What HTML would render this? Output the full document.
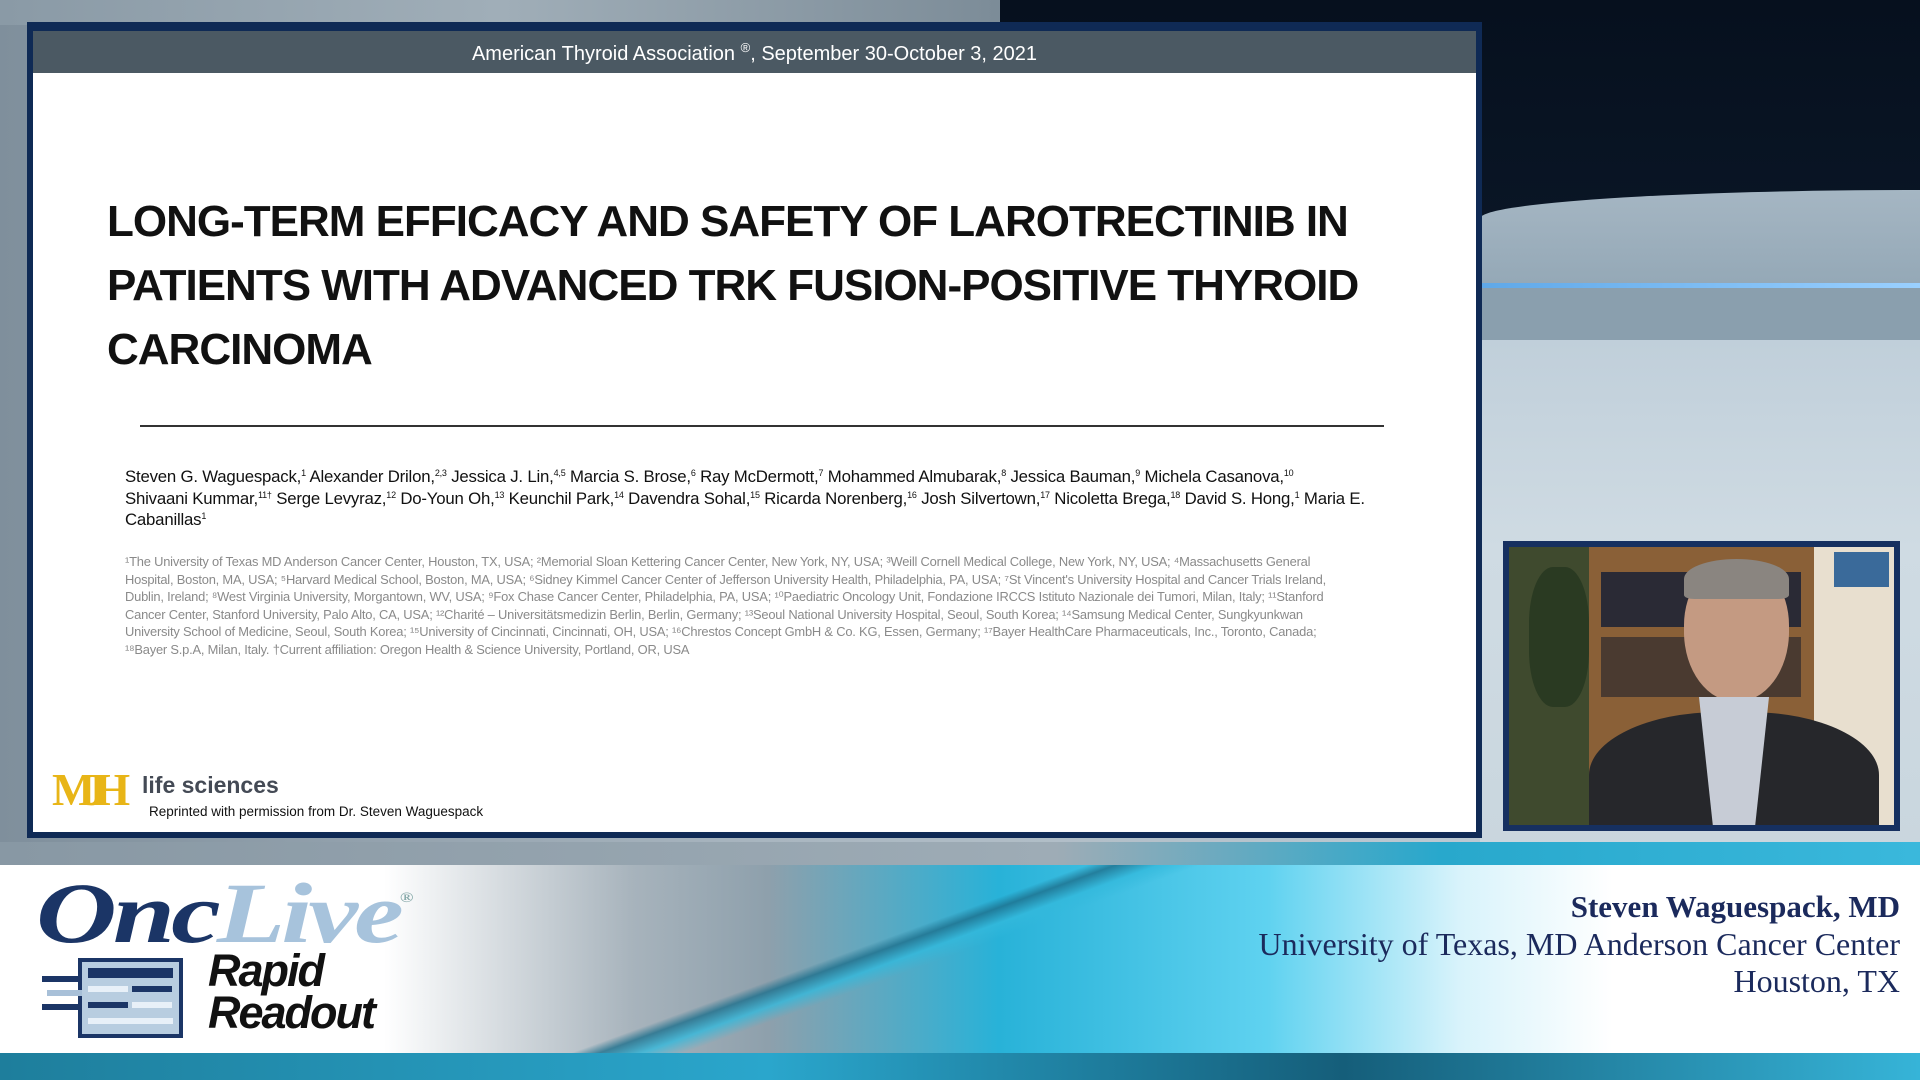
<!DOCTYPE html>
<html><head><meta charset="utf-8"><style>
*{margin:0;padding:0;box-sizing:border-box}
body{width:1920px;height:1080px;overflow:hidden;position:relative;font-family:"Liberation Sans",sans-serif;
background:linear-gradient(90deg,#7f8f9c 0%,#a9b6c0 40%,#b9c6cf 70%,#c5d2da 100%)}
.abs{position:absolute}
sup{font-size:9px;line-height:0;vertical-align:6px}
</style></head><body>
<div class="abs" style="left:0;top:0;width:1000px;height:25px;background:linear-gradient(90deg,#8a9aa6,#a0aeb8 50%,#7c8c98)"></div>
<div class="abs" style="left:1000px;top:0;width:920px;height:240px;background:linear-gradient(180deg,#06101e,#0a1626)"></div>
<div class="abs" style="left:1480px;top:190px;width:440px;height:130px;background:linear-gradient(180deg,#a5b6c3,#8ea3b2);border-radius:100% 0 0 0/22% 0 0 0"></div>
<div class="abs" style="left:1480px;top:283px;width:440px;height:5px;background:linear-gradient(90deg,#5fa8e8,#9ad0ff)"></div>
<div class="abs" style="left:1480px;top:288px;width:440px;height:52px;background:#8a9fae"></div>
<div class="abs" style="left:1480px;top:340px;width:440px;height:520px;background:linear-gradient(180deg,#c0cfda,#cfdbe3 40%,#c9d6de)"></div>

<!-- slide -->
<div class="abs" style="left:27px;top:22px;width:1455px;height:816px;background:#0f2a55;"></div>
<div class="abs" style="left:33px;top:31px;width:1443px;height:801px;background:#fff;"></div>
<div class="abs" style="left:33px;top:31px;width:1443px;height:42px;background:#4b5963;color:#fff;font-size:20px;text-align:center;line-height:46px;">American Thyroid Association <sup style="font-size:13px;vertical-align:8px">®</sup>, September 30-October 3, 2021</div>
<div class="abs" style="left:107px;top:190px;width:1360px;font-weight:bold;font-size:44px;line-height:64px;letter-spacing:-1px;color:#111;">LONG-TERM EFFICACY AND SAFETY OF LAROTRECTINIB IN<br>PATIENTS WITH ADVANCED TRK FUSION-POSITIVE THYROID<br>CARCINOMA</div>
<div class="abs" style="left:140px;top:425px;width:1244px;height:2px;background:#333"></div>
<div class="abs" style="left:125px;top:466px;width:1400px;font-size:16.8px;line-height:21.5px;letter-spacing:-0.2px;color:#111;">Steven G. Waguespack,<sup>1</sup> Alexander Drilon,<sup>2,3</sup> Jessica J. Lin,<sup>4,5</sup> Marcia S. Brose,<sup>6</sup> Ray McDermott,<sup>7</sup> Mohammed Almubarak,<sup>8</sup> Jessica Bauman,<sup>9</sup> Michela Casanova,<sup>10</sup><br>Shivaani Kummar,<sup>11†</sup> Serge Levyraz,<sup>12</sup> Do-Youn Oh,<sup>13</sup> Keunchil Park,<sup>14</sup> Davendra Sohal,<sup>15</sup> Ricarda Norenberg,<sup>16</sup> Josh Silvertown,<sup>17</sup> Nicoletta Brega,<sup>18</sup> David S. Hong,<sup>1</sup> Maria E.<br>Cabanillas<sup>1</sup></div>
<div class="abs" style="left:125px;top:553px;width:1400px;font-size:12.9px;line-height:17.6px;letter-spacing:-0.2px;color:#8a8a8a;">¹The University of Texas MD Anderson Cancer Center, Houston, TX, USA; ²Memorial Sloan Kettering Cancer Center, New York, NY, USA; ³Weill Cornell Medical College, New York, NY, USA; ⁴Massachusetts General<br>Hospital, Boston, MA, USA; ⁵Harvard Medical School, Boston, MA, USA; ⁶Sidney Kimmel Cancer Center of Jefferson University Health, Philadelphia, PA, USA; ⁷St Vincent's University Hospital and Cancer Trials Ireland,<br>Dublin, Ireland; ⁸West Virginia University, Morgantown, WV, USA; ⁹Fox Chase Cancer Center, Philadelphia, PA, USA; ¹⁰Paediatric Oncology Unit, Fondazione IRCCS Istituto Nazionale dei Tumori, Milan, Italy; ¹¹Stanford<br>Cancer Center, Stanford University, Palo Alto, CA, USA; ¹²Charité – Universitätsmedizin Berlin, Berlin, Germany; ¹³Seoul National University Hospital, Seoul, South Korea; ¹⁴Samsung Medical Center, Sungkyunkwan<br>University School of Medicine, Seoul, South Korea; ¹⁵University of Cincinnati, Cincinnati, OH, USA; ¹⁶Chrestos Concept GmbH &amp; Co. KG, Essen, Germany; ¹⁷Bayer HealthCare Pharmaceuticals, Inc., Toronto, Canada;<br>¹⁸Bayer S.p.A, Milan, Italy. †Current affiliation: Oregon Health &amp; Science University, Portland, OR, USA</div>
<div class="abs" style="left:52px;top:764px;font-family:'Liberation Serif',serif;font-size:46px;font-weight:bold;color:#e8b517;letter-spacing:-12px;line-height:52px;">MJH</div>
<div class="abs" style="left:142px;top:772px;font-size:23px;font-weight:bold;color:#444a55;">life sciences</div>
<div class="abs" style="left:149px;top:804px;font-size:13.5px;color:#111;">Reprinted with permission from Dr. Steven Waguespack</div>

<!-- video -->
<div class="abs" style="left:1503px;top:541px;width:397px;height:290px;background:#163060"></div>
<div class="abs" style="left:1509px;top:547px;width:385px;height:278px;background:#c9b99a;overflow:hidden">
  <div class="abs" style="left:0;top:0;width:80px;height:278px;background:#3f4a2e"></div>
  <div class="abs" style="left:20px;top:20px;width:60px;height:140px;background:#2a3a22;border-radius:40%"></div>
  <div class="abs" style="left:80px;top:0;width:225px;height:278px;background:#8a6037"></div>
  <div class="abs" style="left:92px;top:25px;width:200px;height:55px;background:#2a2a35"></div>
  <div class="abs" style="left:92px;top:90px;width:200px;height:60px;background:#4a3a30"></div>
  <div class="abs" style="left:305px;top:0;width:80px;height:278px;background:#e8dfcf"></div>
  <div class="abs" style="left:325px;top:5px;width:55px;height:35px;background:#3a6a9a"></div>
  <div class="abs" style="left:175px;top:15px;width:105px;height:140px;background:#c49a82;border-radius:45% 45% 50% 50%"></div>
  <div class="abs" style="left:175px;top:12px;width:105px;height:40px;background:#8a8580;border-radius:50% 50% 10% 10%"></div>
  <div class="abs" style="left:80px;top:165px;width:290px;height:140px;background:#26272b;border-radius:45% 45% 0 0"></div>
  <div class="abs" style="left:190px;top:150px;width:70px;height:130px;background:#c7ccd6;clip-path:polygon(0 0,100% 0,80% 100%,20% 100%)"></div>
</div>

<!-- lower third -->
<div class="abs" style="left:0;top:842px;width:1920px;height:24px;background:linear-gradient(90deg,#8898a4,#9eacb6 55%,#28a8cc 75%,#3ab8dc)"></div>
<div class="abs" style="left:0;top:865px;width:1920px;height:188px;background:linear-gradient(90deg,#fff 0%,#fff 20%,#a7b3bc 33%,#8ea0ac 40%,#28b2d8 52%,#5fd2f0 66%,#d8f3fb 76%,#fff 84%,#fff 100%)"></div>
<div class="abs" style="left:450px;top:865px;width:900px;height:188px;background:linear-gradient(160deg,transparent 45%,#1d6f8c 47%,#33b9dc 50%,transparent 53%);opacity:.8"></div>
<div class="abs" style="left:0;top:1053px;width:1920px;height:27px;background:linear-gradient(90deg,#1e7e9c,#2aa6cc 40%,#155e7a 70%,#36b4d8)"></div>

<div class="abs" style="left:36px;top:868px;font-family:'Liberation Serif',serif;font-style:italic;font-weight:bold;font-size:86px;letter-spacing:-3px;line-height:90px;transform:scaleX(1.3);transform-origin:left top;"><span style="color:#1b3566">Onc</span><span style="color:#a7c3dc">Live</span><sup style="font-size:14px;color:#8aa;vertical-align:40px">®</sup></div>
<div class="abs" style="left:42px;top:958px;width:160px;height:80px;">
 <div class="abs" style="left:36px;top:0;width:105px;height:80px;border:4px solid #1b3566;background:#b8cde0"></div>
 <div class="abs" style="left:46px;top:10px;width:85px;height:10px;background:#1b3566"></div>
 <div class="abs" style="left:46px;top:28px;width:40px;height:6px;background:#e8f0f8"></div>
 <div class="abs" style="left:90px;top:28px;width:40px;height:6px;background:#1b3566"></div>
 <div class="abs" style="left:46px;top:44px;width:40px;height:6px;background:#1b3566"></div>
 <div class="abs" style="left:90px;top:44px;width:40px;height:6px;background:#e8f0f8"></div>
 <div class="abs" style="left:46px;top:60px;width:85px;height:6px;background:#e8f0f8"></div>
 <div class="abs" style="left:0;top:18px;width:40px;height:6px;background:#1b3566"></div>
 <div class="abs" style="left:5px;top:32px;width:35px;height:6px;background:#a8c0d8"></div>
 <div class="abs" style="left:0;top:46px;width:40px;height:6px;background:#1b3566"></div>
</div>
<div class="abs" style="left:208px;top:950px;font-style:italic;font-weight:bold;font-size:45px;line-height:42px;color:#111;letter-spacing:-2px;">Rapid<br>Readout</div>

<div class="abs" style="right:20px;top:888px;text-align:right;font-family:'Liberation Serif',serif;color:#1b2a5c;">
 <div style="font-size:31px;font-weight:bold;line-height:38px;">Steven Waguespack, MD</div>
 <div style="font-size:32px;line-height:37px;">University of Texas, MD Anderson Cancer Center</div>
 <div style="font-size:32px;line-height:37px;">Houston, TX</div>
</div>
</body></html>
